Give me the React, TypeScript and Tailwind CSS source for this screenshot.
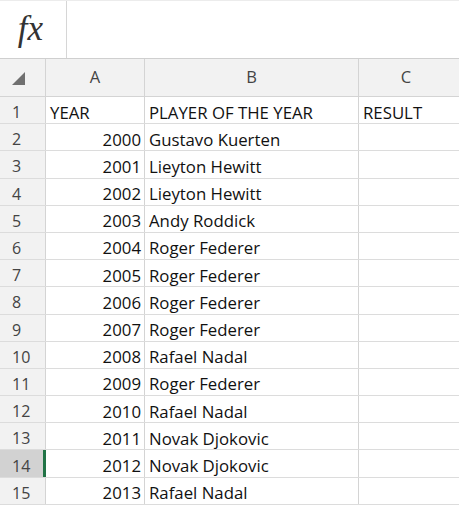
import React from "react";

const rows: [string, string, string][] = [
  ["YEAR", "PLAYER OF THE YEAR", "RESULT"],
  ["2000", "Gustavo Kuerten", ""],
  ["2001", "Lieyton Hewitt", ""],
  ["2002", "Lieyton Hewitt", ""],
  ["2003", "Andy Roddick", ""],
  ["2004", "Roger Federer", ""],
  ["2005", "Roger Federer", ""],
  ["2006", "Roger Federer", ""],
  ["2007", "Roger Federer", ""],
  ["2008", "Rafael Nadal", ""],
  ["2009", "Roger Federer", ""],
  ["2010", "Rafael Nadal", ""],
  ["2011", "Novak Djokovic", ""],
  ["2012", "Novak Djokovic", ""],
  ["2013", "Rafael Nadal", ""],
];

const font = { fontFamily: '"Open Sans", "Noto Sans", sans-serif' };

export default function App() {
  return (
    <div className="w-[459px] h-[514px] overflow-hidden bg-white" style={font}>
      {/* Formula bar */}
      <div className="h-[59px] flex border-t border-[#ececec] border-b border-b-[#cfcfcf]">
        <div className="w-[67px] h-full border-r border-[#d6d6d6] flex items-center justify-center pr-[5px] pb-[2px]">
          <span className="text-[35px] italic text-[#333] leading-none" style={{ fontFamily: '"Liberation Serif", serif' }}>
            fx
          </span>
        </div>
        <div className="flex-1" />
      </div>

      {/* Column headers */}
      <div className="flex h-[38px] bg-[#f2f2f2] border-b border-[#d4d4d4] text-[16.5px] text-[#444]">
        <div className="w-[46px] border-r border-[#d4d4d4] flex items-end justify-start pl-[12px] pb-[11px]">
          <svg width="13" height="13" viewBox="0 0 13 13">
            <polygon points="13,0 13,13 0,13" fill="#707070" />
          </svg>
        </div>
        <div className="w-[99px] border-r border-[#d4d4d4] flex items-center justify-center">A</div>
        <div className="w-[214px] border-r border-[#d4d4d4] flex items-center justify-center">B</div>
        <div className="flex-1 flex items-center justify-center pr-[6px]">C</div>
      </div>

      {/* Rows */}
      {rows.map(([a, b, c], i) => {
        const selected = i === 13;
        return (
          <div key={i} className="flex h-[27.2px] border-b border-[#dcdcdc] text-[16.8px] text-[#111]">
            <div
              className={`w-[46px] flex items-center pl-[12px] pt-[4px] text-[16px] text-[#444] border-r ${
                selected ? "bg-[#d2d2d2] border-r-[3px] border-[#217346]" : "bg-[#f2f2f2] border-[#d4d4d4]"
              }`}
            >
              {i + 1}
            </div>
            <div
              className={`w-[99px] border-r border-[#d4d4d4] flex items-center pt-[4px] ${
                i === 0 ? "justify-start pl-[4px]" : "justify-end pr-[3px]"
              }`}
            >
              {a}
            </div>
            <div className="w-[214px] border-r border-[#d4d4d4] flex items-center pl-[4px] pt-[4px] whitespace-nowrap">
              {b}
            </div>
            <div className="flex-1 flex items-center pl-[4px] pt-[4px]">{c}</div>
          </div>
        );
      })}
    </div>
  );
}
